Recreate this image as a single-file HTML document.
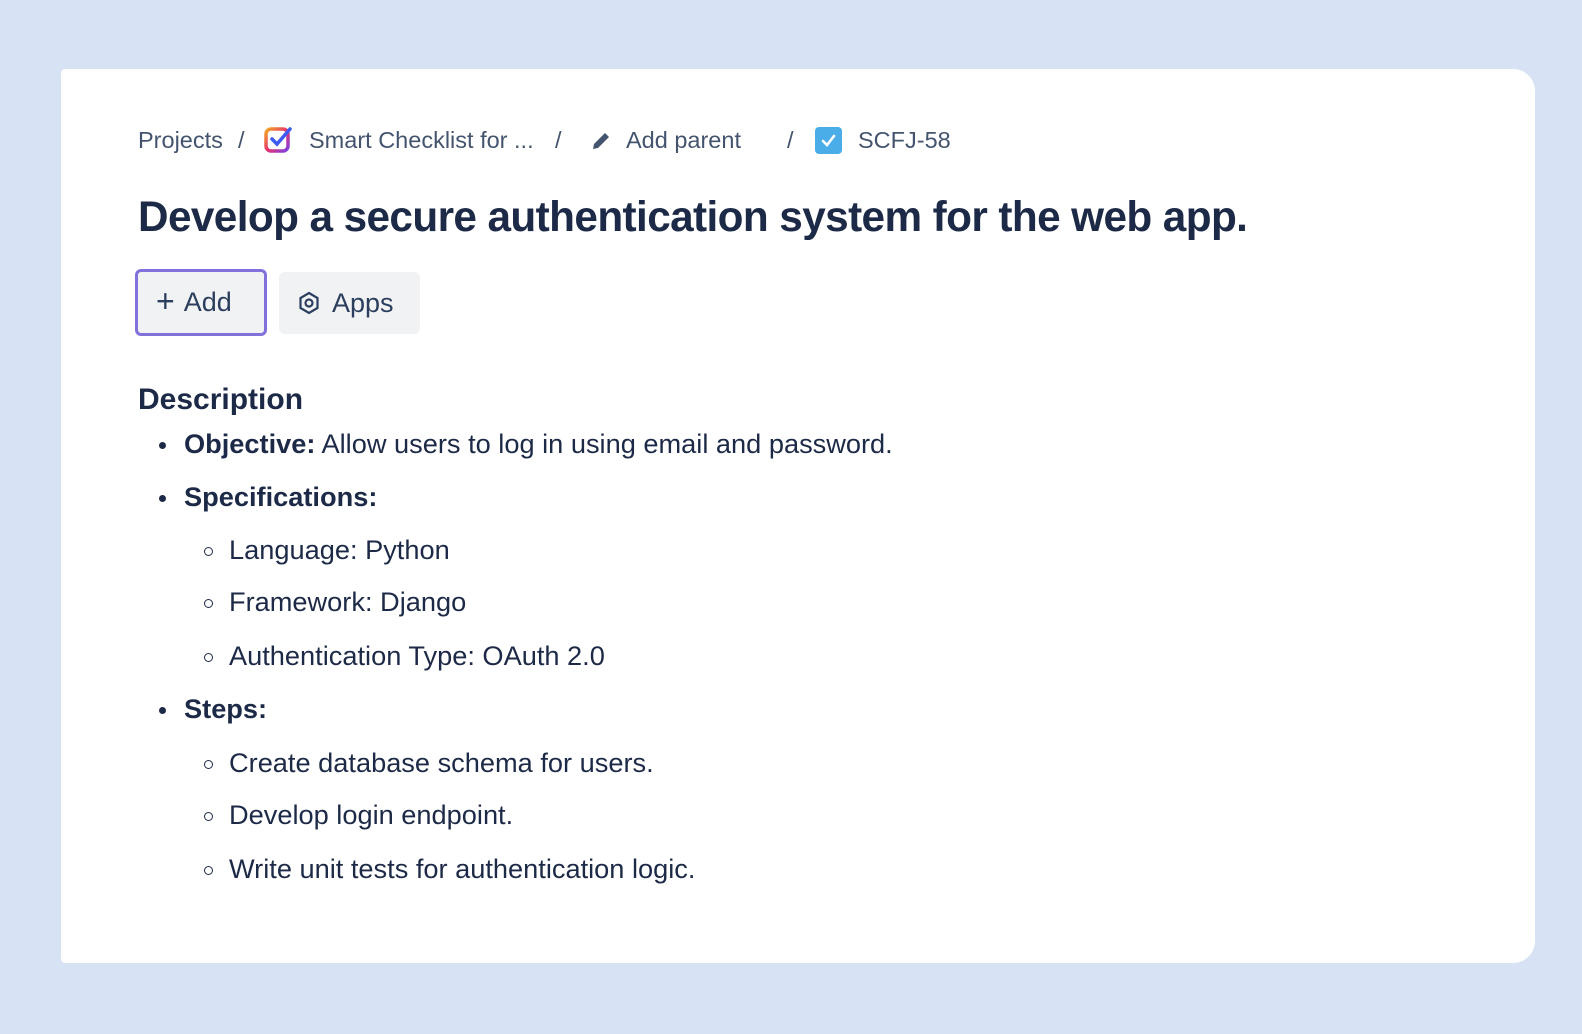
<!DOCTYPE html>
<html><head><meta charset="utf-8"><style>
*{margin:0;padding:0;box-sizing:border-box}
body{width:1582px;height:1034px;background:#d7e2f4;font-family:"Liberation Sans",sans-serif;position:relative;overflow:hidden;color:#172b4d}
.card{position:absolute;left:61px;top:69px;width:1474px;height:894px;background:#fff;border-radius:4px 22px 22px 4px}
.a{position:absolute;white-space:nowrap}
.bc{font-size:23.5px;color:#44546f;top:127px}
.title{left:138px;top:193px;font-size:42.3px;font-weight:bold;letter-spacing:-0.6px;color:#1d2a47}
.btn{position:absolute;border-radius:6px;background:#f1f2f4;font-size:27px;color:#2c3e5d;display:flex;align-items:center}
.li{position:absolute;font-size:27.2px;white-space:nowrap;color:#1d2a47}
.dot{position:absolute;width:7px;height:7px;border-radius:50%;background:#1d2a47}
.circ{position:absolute;width:9px;height:9px;border-radius:50%;border:1.6px solid #1d2a47}
</style></head><body>
<div class="card"></div>
<div class="a bc" style="left:138px">Projects</div>
<div class="a bc" style="left:238px">/</div>
<svg class="a" style="left:264px;top:126px" width="28" height="28" viewBox="0 0 28 28"><defs><linearGradient id="g" x1="0" y1="0" x2="1" y2="1"><stop offset="0" stop-color="#f5a623"/><stop offset=".5" stop-color="#e8336b"/><stop offset="1" stop-color="#7b3fe4"/></linearGradient></defs><rect x="2" y="3" width="22" height="22" rx="5" fill="none" stroke="url(#g)" stroke-width="3.5"/><path d="M8 13l5 5L26 3" fill="none" stroke="#3d5bf0" stroke-width="3.5" stroke-linecap="round"/></svg>
<div class="a bc" style="left:309px">Smart Checklist for ...</div>
<div class="a bc" style="left:555px">/</div>
<svg class="a" style="left:590px;top:130px" width="22" height="22" viewBox="0 0 22 22"><path d="M3 19l1-5L15 3l4 4L8 18z" fill="#44546f"/></svg>
<div class="a bc" style="left:626px">Add parent</div>
<div class="a bc" style="left:787px">/</div>
<div class="a" style="left:815px;top:127px;width:27px;height:27px;border-radius:4px;background:#4bade8"></div>
<svg class="a" style="left:815px;top:127px" width="27" height="27"><path d="M8 14l4 4 7-9" fill="none" stroke="#fff" stroke-width="2.6" stroke-linecap="round"/></svg>
<div class="a bc" style="left:858px">SCFJ-58</div>
<div class="a title">Develop a secure authentication system for the web app.</div>
<div class="btn" style="left:135px;top:269px;width:132px;height:67px;border:3px solid #8270db;padding-left:18px"><span style="font-size:32px;font-weight:300;margin-right:9px;margin-top:-2px">+</span>Add</div>
<div class="btn" style="left:279px;top:272px;width:141px;height:62px;padding-left:18px"><svg width="24" height="24" viewBox="0 0 24 24" style="margin-right:11px"><path d="M12 2l8.5 5v10L12 22l-8.5-5V7z" fill="none" stroke="#2c3e5d" stroke-width="2.2"/><circle cx="12" cy="12" r="3.5" fill="none" stroke="#2c3e5d" stroke-width="2.2"/></svg>Apps</div>
<div class="a" style="left:138px;top:383px;font-size:30px;font-weight:bold;color:#1d2a47">Description</div>
<div class="dot" style="left:159px;top:442px"></div><div class="li" style="left:184px;top:428px"><b>Objective:</b> Allow users to log in using email and password.</div>
<div class="dot" style="left:159px;top:495px"></div><div class="li" style="left:184px;top:481px"><b>Specifications:</b></div>
<div class="circ" style="left:204px;top:547px"></div><div class="li" style="left:229px;top:534px">Language: Python</div>
<div class="circ" style="left:204px;top:599px"></div><div class="li" style="left:229px;top:586px">Framework: Django</div>
<div class="circ" style="left:204px;top:653px"></div><div class="li" style="left:229px;top:640px">Authentication Type: OAuth 2.0</div>
<div class="dot" style="left:159px;top:707px"></div><div class="li" style="left:184px;top:693px"><b>Steps:</b></div>
<div class="circ" style="left:204px;top:760px"></div><div class="li" style="left:229px;top:747px">Create database schema for users.</div>
<div class="circ" style="left:204px;top:812px"></div><div class="li" style="left:229px;top:799px">Develop login endpoint.</div>
<div class="circ" style="left:204px;top:866px"></div><div class="li" style="left:229px;top:853px">Write unit tests for authentication logic.</div>
</body></html>
